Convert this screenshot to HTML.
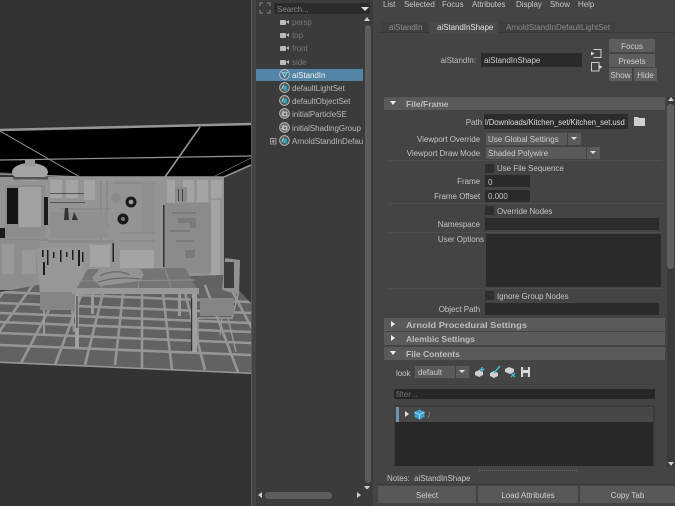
<!DOCTYPE html>
<html><head><meta charset="utf-8">
<style>
html,body{margin:0;padding:0;width:675px;height:506px;overflow:hidden;background:#444}
body{position:relative;font-family:"Liberation Sans",sans-serif;font-size:8px;color:#c4c4c4}
.t{position:absolute;white-space:nowrap;line-height:14px;letter-spacing:-.05px;margin-top:1px}
.r{text-align:right}
.b{position:absolute}
.f{position:absolute;background:#2b2b2b;border-radius:1px}
.btn{position:absolute;background:#5d5d5d;color:#d0d0d0;text-align:center;line-height:15px}
.h{position:absolute;left:384px;width:281px;height:13px;background:#5a5a5a;color:#bdbdbd;font-size:8.5px;font-weight:bold;line-height:15px}
.h span{position:absolute;left:22px;white-space:nowrap}
.h i{position:absolute;left:6px;top:3px;width:0;height:0}
.dn{border-left:3.5px solid transparent;border-right:3.5px solid transparent;border-top:4px solid #eee;top:4px!important}
.rt{border-top:3.5px solid transparent;border-bottom:3.5px solid transparent;border-left:4px solid #eee;left:7px!important}
.dd{position:absolute;background:#5a5a5a;color:#ccc;line-height:14px;padding-left:2px;box-sizing:border-box;overflow:hidden}
.arr{position:absolute;background:#5a5a5a}
.arr:after{content:"";position:absolute;left:3px;top:4px;border-left:3.5px solid transparent;border-right:3.5px solid transparent;border-top:3.5px solid #ddd}
.cb{position:absolute;left:485px;width:9px;height:9px;background:#2e2e2e;border-radius:1px}
.sep{position:absolute;left:387px;width:275px;height:1px;background:#4d4d4d}
.o{position:absolute;left:292px;white-space:nowrap;line-height:14px;letter-spacing:-.05px;color:#b8b8b8;margin-top:1px}
.cam{position:absolute;left:280px;width:6px;height:5px;background:#bbb;border-radius:1px}
.cam:after{content:"";position:absolute;left:6px;top:0;border-top:2.5px solid transparent;border-bottom:2.5px solid transparent;border-right:3px solid #bbb}
.ni{position:absolute;left:279px;width:11px;height:11px}
</style></head><body>

<svg class="b" style="left:0;top:0;filter:blur(.3px)" width="252" height="506" viewBox="0 0 252 506">
<defs><clipPath id="fl"><polygon points="0,292 65,280 224,275 251,303 251,374 0,363"/></clipPath></defs>
<rect width="252" height="506" fill="#333"/>
<polygon points="224,177 251,165 251,305 224,280" fill="#383838"/>
<!-- ceiling -->
<polygon points="0,130 251,124 251,165 224,177 80,177 0,172" fill="#000"/>
<g stroke="#959595" fill="none">
<path d="M0,130 L251,124" stroke-width="2.6"/>
<path d="M0,131 L80,177" stroke-width="1"/>
<path d="M200,127 L165,177" stroke-width="1.6"/>
<path d="M0,160 L251,156" stroke-width="1.2"/>
<path d="M0,174 L80,177 L224,177 L251,165" stroke-width="1.6"/>
<path d="M215,176 L251,158" stroke-width=".6"/>
</g>
<!-- back wall -->
<rect x="0" y="177" width="224" height="110" fill="#949494"/>
<g fill="#a4a4a4">
<rect x="50" y="180" width="12" height="18"/><rect x="66" y="180" width="12" height="18"/><rect x="84" y="180" width="11" height="20"/>
<rect x="167" y="180" width="8" height="24"/><rect x="183" y="180" width="11" height="22"/><rect x="197" y="180" width="11" height="22"/><rect x="211" y="180" width="11" height="18"/><rect x="211" y="200" width="9" height="75"/>
<rect x="120" y="250" width="34" height="20"/>
<rect x="90" y="245" width="20" height="22"/>
</g>
<g fill="#8a8a8a">
<rect x="100" y="182" width="2" height="60"/><rect x="106" y="182" width="2" height="50"/>
<rect x="113" y="182" width="42" height="2"/>
<rect x="142" y="182" width="12" height="50" fill="#8f8f8f"/>
<rect x="48" y="225" width="62" height="2"/><rect x="60" y="208" width="50" height="2"/><rect x="48" y="240" width="66" height="3"/>
<rect x="0" y="238" width="48" height="3"/><rect x="120" y="240" width="35" height="2"/><rect x="120" y="232" width="35" height="2"/>
<rect x="50" y="212" width="58" height="26" fill="#8f8f8f"/>
</g>
<!-- fridge -->
<rect x="165" y="203" width="46" height="70" fill="#8b8b8b"/>
<g fill="#7a7a7a"><rect x="172" y="212" width="24" height="2"/><rect x="178" y="218" width="12" height="5"/><rect x="190" y="218" width="6" height="10"/><rect x="170" y="230" width="20" height="2"/><rect x="176" y="240" width="18" height="2"/><rect x="185" y="250" width="10" height="8"/></g>
<rect x="163" y="205" width="1.6" height="62" fill="#333"/>
<rect x="175" y="187" width="12" height="15" fill="#8b8b8b"/><rect x="178" y="189" width="1" height="12" fill="#444"/><rect x="182" y="189" width="1" height="12" fill="#444"/>
<!-- fans -->
<circle cx="131" cy="202" r="5.5" fill="#1a1a1a"/><circle cx="131" cy="202" r="2.4" fill="#999"/>
<circle cx="123" cy="219" r="5.5" fill="#1a1a1a"/><circle cx="123" cy="219" r="2" fill="#777"/>
<circle cx="116" cy="198" r="5" fill="#8a8a8a"/>
<!-- lamp -->
<ellipse cx="30" cy="172" rx="18" ry="9" fill="#a4a4a4"/><rect x="25" y="160" width="10" height="6" fill="#999"/>
<rect x="13" y="177" width="35" height="2.5" fill="#555"/>
<!-- left cabinet -->
<rect x="5" y="185" width="40" height="52" fill="#8c8c8c"/><rect x="19" y="187" width="22" height="40" fill="#a2a2a2"/>
<rect x="7" y="188" width="11" height="36" fill="#141414"/>
<rect x="44" y="197" width="4" height="28" fill="#1a1a1a"/>
<rect x="0" y="228" width="5" height="10" fill="#1a1a1a"/>
<polygon points="65,208 68,208 69,220 64,220" fill="#333"/><polygon points="74,212 78,220 72,220" fill="#333"/>
<g fill="#555"><rect x="50" y="193" width="34" height="1"/><rect x="50" y="202" width="35" height="1"/></g>
<rect x="112.5" y="243" width="1.5" height="19" fill="#222"/>
<!-- lower left bench -->
<rect x="0" y="240" width="40" height="50" fill="#8e8e8e"/><g fill="#999"><rect x="2" y="244" width="12" height="30"/><rect x="22" y="250" width="14" height="24"/></g>
<!-- floor -->
<polygon points="0,292 65,280 224,275 251,303 251,374 0,363" fill="#626262"/>
<g clip-path="url(#fl)" stroke="#969696" fill="none">
<g stroke-width="2.6">
<path d="M-12,285 L-95,365 M10,285 L-60,365 M33,285 L-25,365 M62,285 L20,365 M85,285 L55,365 M105,285 L85,365 M124,285 L115,365 M142,285 L142,370 M162,285 L172,370 M183,285 L205,370 M205,285 L238,372 M229,285 L275,372 M251,285 L310,372"/>
<path d="M0,292 L251,302 M0,303 L251,313 M0,313 L251,323 M0,322 L251,332 M0,333 L251,343 M0,345 L251,355"/>
</g>
<path d="M0,363 L251,374" stroke-width="3"/>
</g>
<!-- speckled left chair -->
<polygon points="36,248 84,247 84,292 40,294" fill="#979797"/>
<g fill="#1c1c1c"><rect x="42" y="250" width="1.6" height="7"/><rect x="47" y="250" width="1.5" height="15"/><rect x="53" y="252" width="1.5" height="6"/><rect x="60" y="250" width="1.5" height="12"/><rect x="66" y="252" width="1.5" height="5"/><rect x="72" y="250" width="1.5" height="10"/><rect x="78" y="250" width="2" height="16"/><rect x="82" y="252" width="1.5" height="10"/><rect x="43" y="262" width="2" height="13"/></g>
<rect x="40" y="292" width="35" height="18" fill="#858585"/>
<path d="M44,310 L44,335 M72,310 L74,332" stroke="#999" stroke-width="2" fill="none"/>
<!-- table -->
<polygon points="88,269 185,268 198,290 75,291" fill="#757575"/>
<g stroke="#8e8e8e" stroke-width="1"><path d="M110,269 L100,291 M140,269 L138,291 M165,269 L172,291 M80,281 L195,280"/></g>
<polygon points="92,278 100,268 140,268 144,275 140,281 100,286" fill="#939393"/>
<path d="M100,276 Q115,268 130,275 M98,282 Q118,276 140,279" stroke="#6a6a6a" stroke-width="1.2" fill="none"/>
<rect x="72" y="288" width="127" height="6" fill="#999"/>
<rect x="75" y="294" width="4" height="54" fill="#a0a0a0"/><rect x="76.5" y="296" width="1" height="32" fill="#333"/>
<rect x="192" y="294" width="5" height="58" fill="#a0a0a0"/><rect x="191" y="298" width="1.2" height="53" fill="#333"/>
<rect x="91" y="294" width="3" height="20" fill="#999"/><rect x="178" y="294" width="3" height="22" fill="#999"/>
<!-- right chair -->
<path d="M225,258 L240,260 L239,295 L222,290 Z" fill="#919191"/>
<rect x="224" y="262" width="10" height="26" fill="#3d3d3d"/>
<g stroke="#999" stroke-width="1.5" fill="none"><path d="M238,295 L232,318 L198,318 M198,318 L198,345 M222,318 L220,335 M228,318 L236,352"/></g>
<rect x="200" y="298" width="34" height="18" fill="#858585"/>
<rect x="251" y="0" width="1" height="506" fill="#5a5a5a"/>
</svg>

<!-- outliner -->
<div class="b" style="left:252px;top:0;width:126px;height:506px;background:#3b3b3b"></div>
<div class="b" style="left:252px;top:0;width:4px;height:506px;background:#444"></div>
<div class="b" style="left:373px;top:0;width:5px;height:506px;background:#444"></div>
<svg class="b" style="left:259px;top:2px" width="12" height="12"><path d="M1,4V1H4M8,1h3v3M11,8v3H8M4,11H1V8" stroke="#888" stroke-width="1" fill="none"/></svg>
<div class="f" style="left:274px;top:3px;width:96px;height:11px;background:#2b2b2b"></div>
<div class="t" style="left:277px;top:2px;color:#888">Search...</div>
<div class="b" style="left:361px;top:7px;border-left:4px solid transparent;border-right:4px solid transparent;border-top:4px solid #ddd"></div>
<div class="b" style="left:256px;top:15px;width:115px;height:474px;background:#3b3b3b"></div>
<div class="b" style="left:364px;top:17px;border-left:3px solid transparent;border-right:3px solid transparent;border-bottom:4px solid #ccc"></div>
<div class="b" style="left:365px;top:25px;width:6px;height:458px;background:#5c5c5c;border-radius:3px"></div>
<div class="b" style="left:364px;top:486px;border-left:3px solid transparent;border-right:3px solid transparent;border-top:4px solid #ccc"></div>
<div class="b" style="left:256px;top:69px;width:107px;height:12px;background:#5285a6"></div>

<div class="cam" style="top:20px"></div><div class="o" style="top:15px;color:#777">persp</div>
<div class="cam" style="top:33px"></div><div class="o" style="top:28px;color:#777">top</div>
<div class="cam" style="top:46px"></div><div class="o" style="top:41px;color:#777">front</div>
<div class="cam" style="top:60px"></div><div class="o" style="top:55px;color:#777">side</div>
<svg class="ni" style="top:69px" viewBox="0 0 12 12"><circle cx="6" cy="6" r="5.3" fill="#4a6f88" stroke="#b5c5cf"/><path d="M3,3.5H9L6,9Z" fill="#39a0b8" stroke="#ddd" stroke-width=".7"/></svg>
<div class="o" style="top:68px;color:#eee">aiStandIn</div>
<svg class="ni" style="top:82px" viewBox="0 0 12 12"><circle cx="6" cy="6" r="5.3" fill="#555" stroke="#bbb"/><rect x="4.5" y="4" width="4" height="5" fill="#27a9c9"/><path d="M3,8L5,3" stroke="#ccc"/></svg>
<div class="o" style="top:81px">defaultLightSet</div>
<svg class="ni" style="top:95px" viewBox="0 0 12 12"><circle cx="6" cy="6" r="5.3" fill="#555" stroke="#bbb"/><rect x="4.5" y="4" width="4" height="5" fill="#27a9c9"/><path d="M3,8L5,3" stroke="#ccc"/></svg>
<div class="o" style="top:94px">defaultObjectSet</div>
<svg class="ni" style="top:108px" viewBox="0 0 12 12"><circle cx="6" cy="6" r="5.3" fill="#666" stroke="#bbb"/><rect x="4.5" y="4.5" width="4" height="4" fill="none" stroke="#ddd"/><path d="M3,8L5,3" stroke="#ccc"/></svg>
<div class="o" style="top:107px">initialParticleSE</div>
<svg class="ni" style="top:122px" viewBox="0 0 12 12"><circle cx="6" cy="6" r="5.3" fill="#666" stroke="#bbb"/><rect x="4.5" y="4.5" width="4" height="4" fill="none" stroke="#ddd"/><path d="M3,8L5,3" stroke="#ccc"/></svg>
<div class="o" style="top:121px">initialShadingGroup</div>
<svg class="b" style="left:270px;top:138px" width="7" height="7"><rect x=".5" y=".5" width="5.5" height="5.5" fill="none" stroke="#999"/><path d="M1.5,3.2H5M3.2,1.5V5" stroke="#aaa"/></svg>
<svg class="ni" style="top:135px" viewBox="0 0 12 12"><circle cx="6" cy="6" r="5.3" fill="#555" stroke="#bbb"/><rect x="4.5" y="4" width="4" height="5" fill="#27a9c9"/><path d="M3,8L5,3" stroke="#ccc"/></svg>
<div class="b" style="left:292px;top:134px;width:71px;height:16px;overflow:hidden"><div class="o" style="left:0;top:0">ArnoldStandInDefaultLightSet</div></div>

<div class="b" style="left:256px;top:489px;width:117px;height:12px;background:#3b3b3b"></div>
<div class="b" style="left:258px;top:492px;border-top:3px solid transparent;border-bottom:3px solid transparent;border-right:4px solid #ccc"></div>
<div class="b" style="left:265px;top:492px;width:67px;height:7px;background:#5c5c5c;border-radius:3px"></div>
<div class="b" style="left:357px;top:492px;border-top:3px solid transparent;border-bottom:3px solid transparent;border-left:4px solid #ccc"></div>

<!-- attribute editor -->
<div class="b" style="left:378px;top:0;width:297px;height:506px;background:#444"></div>
<div class="t" style="left:383px;top:-3px">List</div>
<div class="t" style="left:404px;top:-3px">Selected</div>
<div class="t" style="left:442px;top:-3px">Focus</div>
<div class="t" style="left:472px;top:-3px">Attributes</div>
<div class="t" style="left:516px;top:-3px">Display</div>
<div class="t" style="left:550px;top:-3px">Show</div>
<div class="t" style="left:578px;top:-3px">Help</div>

<div class="b" style="left:381px;top:22px;width:47px;height:10px;background:#3f3f3f"></div>
<div class="b" style="left:499px;top:22px;width:116px;height:10px;background:#3f3f3f"></div>
<div class="b" style="left:378px;top:32px;width:297px;height:1px;background:#3a3a3a"></div>
<div class="b" style="left:430px;top:22px;width:67px;height:12px;background:#4a4a4a"></div>
<div class="t" style="left:389px;top:20px;color:#8f8f8f">aiStandIn</div>
<div class="t" style="left:437px;top:20px;color:#e0e0e0">aiStandInShape</div>
<div class="t" style="left:506px;top:20px;color:#8a8a8a">ArnoldStandInDefaultLightSet</div>

<div class="t r" style="right:199px;top:53px;color:#bbb">aiStandIn:</div>
<div class="f" style="left:481px;top:53px;width:101px;height:14px"></div>
<div class="t" style="left:484px;top:53px;color:#ccc">aiStandInShape</div>
<svg class="b" style="left:589px;top:47px" width="14" height="26" fill="none" stroke="#ccc"><path d="M4.5,2.5H12V10.5H4.5"/><path d="M2,4.5 L5.5,6.5 L2,8.5Z" fill="#ddd" stroke="none"/><path d="M2.5,15.5H10V24H2.5Z"/><path d="M10,18 L13.5,20 L10,22Z" fill="#ddd" stroke="none"/></svg>
<div class="btn" style="left:609px;top:39px;width:46px;height:13px">Focus</div>
<div class="btn" style="left:609px;top:54px;width:46px;height:13px">Presets</div>
<div class="btn" style="left:609px;top:68px;width:23px;height:13px">Show</div>
<div class="btn" style="left:634px;top:68px;width:23px;height:13px">Hide</div>

<!-- scrollbar -->
<div class="b" style="left:667px;top:97px;width:8px;height:370px;background:#3a3a3a"></div>
<div class="b" style="left:668px;top:97px;border-left:3px solid transparent;border-right:3px solid transparent;border-bottom:4px solid #ccc"></div>
<div class="b" style="left:667px;top:104px;width:7px;height:165px;background:#5f5f5f;border-radius:3px"></div>
<div class="b" style="left:668px;top:462px;border-left:3px solid transparent;border-right:3px solid transparent;border-top:4px solid #ccc"></div>

<div class="h" style="top:97px"><i class="dn"></i><span>File/Frame</span></div>

<div class="t r" style="right:193px;top:115px">Path</div>
<div class="f" style="left:484px;top:114px;width:144px;height:15px"></div>
<div class="t" style="left:485px;top:115px;color:#ddd;transform:scaleX(.965);transform-origin:0 0">l/Downloads/Kitchen_set/Kitchen_set.usd</div>
<svg class="b" style="left:633px;top:116px" width="13" height="11"><path d="M1,1H5L6,2H12V10H1Z" fill="#cfcfcf"/></svg>

<div class="t r" style="right:195px;top:132px">Viewport Override</div>
<div class="dd" style="left:486px;top:133px;width:81px;height:12px">Use Global Settings</div>
<div class="arr" style="left:568px;top:133px;width:13px;height:12px"></div>
<div class="t r" style="right:195px;top:146px">Viewport Draw Mode</div>
<div class="dd" style="left:486px;top:147px;width:100px;height:12px">Shaded Polywire</div>
<div class="arr" style="left:587px;top:147px;width:13px;height:12px"></div>
<div class="sep" style="top:160px"></div>

<div class="cb" style="top:164px"></div><div class="t" style="left:497px;top:161px">Use File Sequence</div>
<div class="t r" style="right:195px;top:174px">Frame</div>
<div class="f" style="left:485px;top:175px;width:45px;height:12px"></div><div class="t" style="left:488px;top:175px">0</div>
<div class="t r" style="right:195px;top:189px">Frame Offset</div>
<div class="f" style="left:485px;top:190px;width:45px;height:12px"></div><div class="t" style="left:488px;top:189px">0.000</div>
<div class="sep" style="top:203px"></div>
<div class="cb" style="top:206px"></div><div class="t" style="left:497px;top:204px">Override Nodes</div>
<div class="t r" style="right:195px;top:217px">Namespace</div>
<div class="f" style="left:485px;top:218px;width:174px;height:12px"></div>
<div class="sep" style="top:232px"></div>
<div class="t r" style="right:191px;top:232px">User Options</div>
<div class="f" style="left:486px;top:234px;width:175px;height:53px"></div>
<div class="sep" style="top:288px"></div>
<div class="cb" style="top:291px"></div><div class="t" style="left:497px;top:289px">Ignore Group Nodes</div>
<div class="t r" style="right:195px;top:302px">Object Path</div>
<div class="f" style="left:485px;top:303px;width:174px;height:12px"></div>

<div class="h" style="top:318px"><i class="rt"></i><span style="transform:scaleX(1.1);transform-origin:0 0">Arnold Procedural Settings</span></div>
<div class="h" style="top:332px"><i class="rt"></i><span>Alembic Settings</span></div>
<div class="h" style="top:347px"><i class="dn"></i><span>File Contents</span></div>

<div class="t" style="left:396px;top:366px">look</div>
<div class="dd" style="left:415px;top:366px;width:40px;height:12px;padding-left:3px">default</div>
<div class="arr" style="left:456px;top:366px;width:13px;height:12px"></div>
<svg class="b" style="left:473px;top:364px" width="62" height="15">
<path d="M2,8 L6,6 L10,8 L10,11 L6,13 L2,11Z" fill="#d0d0d0"/><path d="M9,3V8M6.5,5.5H11.5" stroke="#3fb6c9" stroke-width="1.6"/>
<path d="M17,9 L21,7 L25,9 L25,12 L21,14 L17,12Z" fill="#d0d0d0"/><path d="M21,9 L27,2" stroke="#3fb6c9" stroke-width="1.6"/>
<path d="M32,5 L36,3 L41,5 L41,8 L37,10 L32,8Z" fill="#d0d0d0"/><path d="M38,9 L42,13 M42,9 L38,13" stroke="#3fb6c9" stroke-width="1.4"/>
<path d="M48,3H57V13H48Z" fill="#d8d8d8"/><rect x="50" y="3" width="5" height="3" fill="#555"/><rect x="50" y="9" width="5" height="4" fill="#555"/>
</svg>

<div class="f" style="left:394px;top:389px;width:261px;height:10px;background:#272727"></div>
<div class="t" style="left:396px;top:387px;color:#707070">filter ..</div>
<div class="b" style="left:394px;top:405px;width:261px;height:61px;background:#3a3a3a"></div>
<div class="b" style="left:395px;top:407px;width:258px;height:59px;background:#282828"></div>
<div class="b" style="left:395px;top:407px;width:258px;height:15px;background:#474747"></div>
<div class="b" style="left:396px;top:407px;width:3px;height:15px;background:#6f93ad"></div>
<div class="b" style="left:405px;top:411px;border-top:3px solid transparent;border-bottom:3px solid transparent;border-left:4px solid #ddd"></div>
<svg class="b" style="left:414px;top:409px" width="11" height="11"><path d="M5.5,.5 L10.5,3 V8 L5.5,10.5 L.5,8 V3Z" fill="#3fa3d3"/><path d="M.5,3 L5.5,5.5 L10.5,3 M5.5,5.5V10.5" stroke="#bfe0f0" stroke-width=".7" fill="none"/></svg>
<div class="t" style="left:428px;top:408px;color:#999">/</div>

<div class="b" style="left:479px;top:470px;width:98px;height:1px;border-top:1px dotted #666"></div>
<div class="t" style="left:387px;top:471px">Notes:&nbsp; aiStandInShape</div>
<div class="b" style="left:378px;top:484px;width:297px;height:1px;background:#3a3a3a"></div>
<div class="btn" style="left:378px;top:486px;width:98px;height:17px;line-height:19px;background:#585858">Select</div>
<div class="btn" style="left:478px;top:486px;width:100px;height:17px;line-height:19px;background:#585858">Load Attributes</div>
<div class="btn" style="left:580px;top:486px;width:95px;height:17px;line-height:19px;background:#585858">Copy Tab</div>
</body></html>
